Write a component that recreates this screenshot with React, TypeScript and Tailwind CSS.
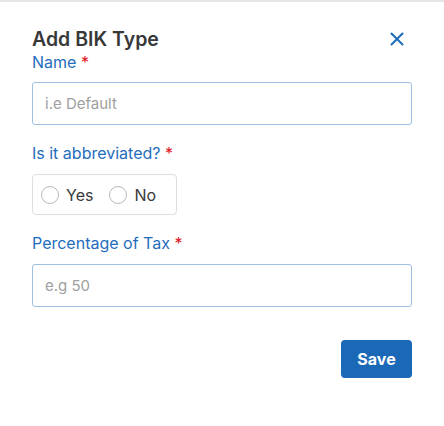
import { X } from "lucide-react";

const Label = ({ text }: { text: string }) => (
  <label className="block text-[16px] leading-[20px] text-[#1f6dbd]">
    {text} <span className="text-[#e0101a]">*</span>
  </label>
);

export default function App() {
  return (
    <div className="min-h-[426px] w-[444px] border-t-2 border-[#e6e6e6] bg-white px-8 pt-[25px] font-['Inter',sans-serif]">
      <div className="flex items-center justify-between">
        <h2 className="text-[19.5px] font-semibold leading-[24px] text-[#383838]">Add BIK Type</h2>
        <button className="mr-[4px] text-[#1d6cba]">
          <X size={22} strokeWidth={2.2} />
        </button>
      </div>
      <div className="mt-[1px]">
        <Label text="Name" />
        <input
          placeholder="i.e Default"
          className="mt-[10px] box-border h-[43px] w-full rounded-[3px] border border-[#9fbfe2] px-3 text-[15px] text-[#333] outline-none placeholder:text-[#a0a0a0]"
        />
      </div>
      <div className="mt-[18px]">
        <Label text="Is it abbreviated?" />
        <div className="mt-[11px] flex h-[41px] w-[145px] items-center gap-[16px] rounded-[4px] border border-[#dedede] px-[8px] text-[16px] text-[#3a3a3a]">
          <label className="flex items-center gap-[7px]">
            <span className="h-[18px] w-[18px] rounded-full border border-[#b8b8b8]" />
            Yes
          </label>
          <label className="flex items-center gap-[7px]">
            <span className="h-[18px] w-[18px] rounded-full border border-[#b8b8b8]" />
            No
          </label>
        </div>
      </div>
      <div className="mt-[18px]">
        <Label text="Percentage of Tax" />
        <input
          placeholder="e.g 50"
          className="mt-[11px] box-border h-[43px] w-full rounded-[3px] border border-[#9fbfe2] px-3 text-[15px] text-[#333] outline-none placeholder:text-[#a0a0a0]"
        />
      </div>
      <div className="mt-[33px] flex justify-end">
        <button className="h-[38px] w-[71px] rounded-[4px] bg-[#1a68b6] text-[16px] font-bold text-white">
          Save
        </button>
      </div>
    </div>
  );
}
